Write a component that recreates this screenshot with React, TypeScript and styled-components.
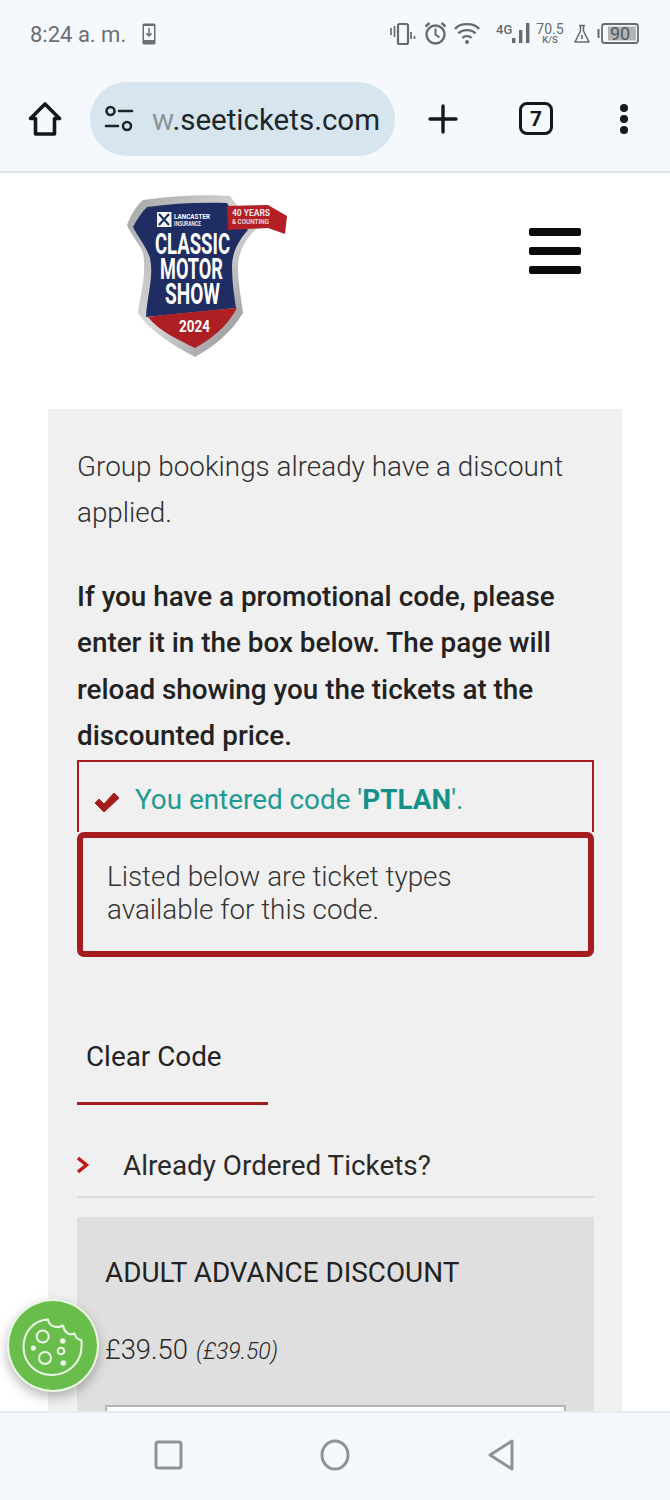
import React from "react";
import styled, { createGlobalStyle } from "styled-components";

const Global = createGlobalStyle`
  html, body { margin: 0; padding: 0; background: #fff; }
  body { font-family: Roboto, "Liberation Sans", sans-serif; }
  * { box-sizing: border-box; }
`;

const Screen = styled.div`
  position: relative;
  width: 670px;
  height: 1500px;
  display: flex;
  flex-direction: column;
  overflow: hidden;
`;

const StatusBar = styled.div`
  height: 68px;
  flex: none;
  background: #f5f9fe;
  display: flex;
  align-items: center;
  justify-content: space-between;
  padding: 0 30px;
  color: #6a6f73;
`;
const StatusLeft = styled.div`
  display: flex;
  align-items: center;
  gap: 16px;
`;
const Time = styled.span`
  font-size: 22px;
`;
const StatusRight = styled.div`
  display: flex;
  align-items: center;
`;

const Toolbar = styled.div`
  height: 105px;
  flex: none;
  background: #f5f9fe;
  border-bottom: 2px solid #dfe3e7;
  display: flex;
  align-items: center;
  padding: 0 0 2px 28px;
`;
const UrlPill = styled.div`
  width: 305px;
  height: 74px;
  margin-left: 28px;
  background: #d6e5ee;
  border-radius: 37px;
  display: flex;
  align-items: center;
  padding-left: 14px;
  overflow: hidden;
`;
const UrlText = styled.span`
  margin-left: 18px;
  padding-top: 3px;
  font-size: 29.5px;
  color: #20272c;
  white-space: nowrap;
`;
const FadedW = styled.span`
  color: #8b9499;
`;
const PlusSlot = styled.div`
  margin-left: 32px;
  display: flex;
`;
const TabCount = styled.div`
  width: 34px;
  height: 33px;
  margin-left: 60px;
  border: 3.4px solid #14181b;
  border-radius: 8px;
  display: flex;
  align-items: center;
  justify-content: center;
  font-size: 21px;
  font-weight: 700;
  color: #14181b;
`;
const Dots = styled.div`
  margin-left: 67px;
  display: flex;
  flex-direction: column;
  gap: 3px;
`;
const Dot = styled.span`
  width: 8px;
  height: 8px;
  border-radius: 50%;
  background: #14181b;
`;

const Page = styled.div`
  flex: 1;
  min-height: 0;
  overflow: hidden;
  background: #fff;
`;
const SiteHeader = styled.div`
  height: 236px;
  display: flex;
  padding: 22px 89px 0 127px;
  justify-content: space-between;
`;
const Burger = styled.div`
  width: 52px;
  margin-top: 33px;
  height: 46px;
  display: flex;
  flex-direction: column;
  justify-content: space-between;
`;
const BurgerBar = styled.span`
  height: 8px;
  border-radius: 2px;
  background: #0b0b0b;
`;

const Panel = styled.div`
  margin: 0 48px;
  background: #f0f0f0;
  padding: 35px 28px 0 29px;
  color: #2f2f2f;
`;
const Lead = styled.p`
  margin: 0;
  font-size: 27.85px;
  font-weight: 300;
  line-height: 46.4px;
`;
const Strong = styled.p`
  margin: 37px 0 0;
  font-size: 27.85px;
  font-weight: 500;
  line-height: 46.4px;
  color: #222;
`;
const Notice = styled.div`
  margin-top: 1px;
  border: 2px solid #a51c1e;
  border-bottom: 0;
  height: 72px;
  display: flex;
  align-items: center;
  padding-left: 15px;
  padding-top: 4px;
  gap: 15px;
`;
const CheckSlot = styled.span`
  display: flex;
  margin-top: 6px;
`;
const NoticeText = styled.span`
  font-size: 27.85px;
  font-weight: 400;
  color: #1f9a94;
  b { font-weight: 700; color: #14908b; }
`;
const Listed = styled.div`
  height: 125px;
  border: 6px solid #a51c1e;
  border-radius: 7px;
  padding: 22px 0 0 24px;
  font-size: 27.85px;
  font-weight: 300;
  line-height: 33px;
  color: #333;
`;
const ClearCode = styled.div`
  margin-top: 76px;
  width: 191px;
  height: 72px;
  padding: 9px 0 0 9px;
  border-bottom: 3px solid #a51c1e;
  font-size: 27.85px;
  line-height: 30px;
  color: #222;
`;
const Accordion = styled.div`
  display: flex;
  align-items: center;
  height: 93px;
  border-bottom: 2px solid #dcdcdc;
  gap: 32px;
  padding-top: 33px;
  padding-bottom: 4px;
  font-size: 27.85px;
  color: #2a2a2a;
`;
const TicketCard = styled.div`
  margin-top: 19px;
  height: 300px;
  background: #dfdfdf;
  padding: 39px 28px 0;
`;
const TicketName = styled.div`
  font-size: 27.85px;
  line-height: 34px;
  color: #222;
`;
const PriceRow = styled.div`
  margin-top: 43px;
  font-size: 27.4px;
  font-weight: 300;
  line-height: 34px;
  color: #2a2a2a;
`;
const PriceOld = styled.i`
  font-size: 23px;
  margin-left: 8px;
`;
const SelectBox = styled.div`
  margin-top: 36px;
  height: 80px;
  background: #fff;
  border: 2px solid #b5b5b5;
`;

const NavBar = styled.div`
  height: 89px;
  flex: none;
  background: #f5f9fe;
  border-top: 2px solid #e8ecef;
  display: flex;
  justify-content: center;
  align-items: center;
  gap: 136px;
  padding: 0 1px 4px 0;
`;

const CookieBadge = styled.div`
  position: absolute;
  left: 7px;
  top: 1299px;
  width: 92px;
  height: 93px;
  border-radius: 50%;
  background: #69bd4b;
  border: 2.5px solid #e9f7e3;
  box-shadow: 0 5px 12px rgba(0, 0, 0, 0.28);
  display: flex;
  align-items: center;
  justify-content: center;
`;

const HomeIcon = () => (
  <svg width="34" height="36" viewBox="0 0 34 36" fill="none" stroke="#14181b" strokeWidth="3.6" strokeLinejoin="round">
    <path d="M17 3 L31.5 17.5 H26.5 V33 H7.5 V17.5 H2.5 Z" />
  </svg>
);
const TuneIcon = () => (
  <svg width="30" height="28" viewBox="0 0 30 28" fill="none" stroke="#1e2529" strokeWidth="2.6" strokeLinecap="round">
    <circle cx="6.5" cy="6" r="4" />
    <path d="M15 6 H28" />
    <path d="M2 21 H14" />
    <circle cx="23" cy="21" r="4" />
  </svg>
);
const PlusIcon = () => (
  <svg width="32" height="32" viewBox="0 0 32 32" stroke="#14181b" strokeWidth="3.4" strokeLinecap="round">
    <path d="M16 3 V29 M3 16 H29" />
  </svg>
);
const DownloadIcon = () => (
  <svg width="14" height="22" viewBox="0 0 14 22">
    <rect x="0.5" y="0.5" width="13" height="21" rx="1.5" fill="#6a6f73" />
    <rect x="2" y="3" width="10" height="14" fill="#f5f9fe" />
    <path d="M7 5 V13 M4.4 10.4 L7 13 L9.6 10.4" stroke="#6a6f73" strokeWidth="1.5" fill="none" />
  </svg>
);
const StatusIcons = () => (
  <svg width="252" height="30" viewBox="0 0 252 30" fill="none" stroke="#666b6f" strokeWidth="2">
    {/* vibrate */}
    <path d="M3 9 V16 M6.5 7 V18 M23 13 V20 M26.5 17 V20" strokeWidth="1.7" />
    <rect x="10" y="5" width="10" height="20" rx="1.6" strokeWidth="2.2" />
    {/* alarm */}
    <circle cx="47.5" cy="15.5" r="9" strokeWidth="2.4" />
    <path d="M47.5 9.5 V15.5 L51.5 18.5" />
    <path d="M37.5 7.5 L41.5 4 M57.5 7.5 L53.5 4" strokeWidth="2.4" />
    {/* wifi */}
    <path d="M67 10 C72 3.5 86 3.5 91 10" strokeWidth="2.4" />
    <path d="M70.5 14.5 C74 10 84 10 87.5 14.5" strokeWidth="2.4" />
    <path d="M74.5 19 C76.5 16.5 81.5 16.5 83.5 19" strokeWidth="2.4" />
    <circle cx="79" cy="23" r="2" fill="#666b6f" stroke="none" />
    {/* 4G */}
    <text x="108" y="15" fontFamily="Roboto" fontSize="13" fontWeight="500" fill="#666b6f" stroke="none">4G</text>
    {/* signal */}
    <rect x="124" y="19" width="3.4" height="5" fill="#666b6f" stroke="none" />
    <rect x="131" y="11" width="3.4" height="13" fill="#666b6f" stroke="none" />
    <rect x="138" y="4" width="3.4" height="20" fill="#666b6f" stroke="none" />
    {/* speed */}
    <text x="162" y="15" textAnchor="middle" fontFamily="Roboto" fontSize="14" fill="#666b6f" stroke="none">70.5</text>
    <text x="162" y="24" textAnchor="middle" fontFamily="Roboto" fontSize="9.5" fontWeight="500" fill="#666b6f" stroke="none">K/S</text>
    {/* flask */}
    <path d="M191 6.5 H197 M192.5 6.5 V12 L187 23 H201 L195.5 12 V6.5" strokeWidth="1.6" strokeLinejoin="round" />
    <path d="M194 16 V20" strokeWidth="1.6" />
    {/* battery */}
    <rect x="209.5" y="10" width="2" height="9" fill="#666b6f" stroke="none" />
    <rect x="214" y="5" width="36" height="19" rx="2.5" strokeWidth="1.8" />
    <rect x="220" y="7.5" width="28" height="14" fill="#b1b3b5" stroke="none" />
    <text x="222" y="21" fontFamily="Roboto" fontSize="18" fill="#55595c" stroke="none">90</text>
  </svg>
);
const Logo = () => (
  <svg width="160" height="164" viewBox="0 0 160 164">
    <defs>
      <linearGradient id="rim" x1="0" y1="0" x2="1" y2="1">
        <stop offset="0" stopColor="#a4a5a7" />
        <stop offset="0.5" stopColor="#d8d8d9" />
        <stop offset="1" stopColor="#85868a" />
      </linearGradient>
    </defs>
    <path d="M16 5 C45 1 78 -1 103 1 C110 10 120 24 130 33 C118 44 111 58 111 72 C111 88 114 102 116 118 C104 138 86 152 68 162 C50 152 24 138 11 118 C13 100 20 80 16 58 C12 48 4 40 0 30 C4 20 9 11 16 5 Z" fill="url(#rim)" />
    <path d="M20 12 C46 8 76 7 100 8 C106 18 114 28 121 35 C111 46 105 58 105 72 C105 86 107 100 109 113 C80 116 48 119 19 122 C20 100 27 82 23 63 C19 51 11 42 6 32 C10 24 15 17 20 12 Z" fill="#1f2d62" />
    <path d="M21 122 C50 118 80 116 110 113 C100 132 84 144 68 153 C50 144 32 136 21 122 Z" fill="#ae1f24" />
    <rect x="30" y="17" width="14.5" height="15" fill="#f3f3f3" />
    <path d="M32 19 L42 30 M42 19 L32 30" stroke="#1d2b63" strokeWidth="2" />
    <text x="47" y="24" fontFamily="Roboto" fontSize="7.5" fontWeight="700" fill="#fff" textLength="36" lengthAdjust="spacingAndGlyphs">LANCASTER</text>
    <text x="47" y="31" fontFamily="Roboto" fontSize="6.5" fontWeight="500" fill="#fff" textLength="27" lengthAdjust="spacingAndGlyphs">INSURANCE</text>
    <g fontFamily="Roboto" fontWeight="700" fill="#fff">
      <text x="28" y="59" fontSize="29" textLength="75" lengthAdjust="spacingAndGlyphs">CLASSIC</text>
      <text x="33" y="84" fontSize="29" textLength="63" lengthAdjust="spacingAndGlyphs">MOTOR</text>
      <text x="38" y="109" fontSize="29" textLength="55" lengthAdjust="spacingAndGlyphs">SHOW</text>
      <text x="52" y="137" fontSize="17" textLength="31" lengthAdjust="spacingAndGlyphs">2024</text>
    </g>
    <path d="M100 11 L141 10 L160 21 L158 39 L141 33 L101 35 Z" fill="#b41f26" />
    <text x="105" y="20.5" fontFamily="Roboto" fontSize="9" fontWeight="700" fill="#f1e6e6" textLength="38" lengthAdjust="spacingAndGlyphs">40 YEARS</text>
    <text x="105" y="29" fontFamily="Roboto" fontSize="7" fontWeight="500" fill="#f1e6e6" textLength="37" lengthAdjust="spacingAndGlyphs">&amp; COUNTING</text>
  </svg>
);
const Check = () => (
  <svg width="26" height="22" viewBox="0 0 26 22">
    <path d="M1 12 L5 8 L10 13 L20 2 L25 7 L10 21 Z" fill="#a51c1e" stroke="#a51c1e" strokeLinejoin="round" />
  </svg>
);
const Chevron = () => (
  <svg width="14" height="18" viewBox="0 0 14 18" fill="none" stroke="#c4161c" strokeWidth="3.4">
    <path d="M1 2 L9.5 9 L1 16" />
  </svg>
);
const CookieIcon = () => (
  <svg width="66" height="66" viewBox="0 0 66 66" fill="none" stroke="#eef8e8" strokeWidth="2">
    <path d="M28 6.5 C13 7 3.5 20 3.5 34 C3.5 50 16 62 32 62 C48 62 61.5 49 61.5 34 C61.5 31 61.5 29 61.5 27 C58 27 55.5 24 54.5 20.5 C49 23 44 19 43 12.5 C36 16 29 13 28 6.5 Z" strokeLinejoin="round" />
    <circle cx="22.7" cy="23.5" r="6" />
    <circle cx="25" cy="45" r="6" />
    <circle cx="41" cy="38" r="3.3" />
    <circle cx="13.3" cy="35" r="2.6" fill="#eef8e8" stroke="none" />
    <circle cx="42.7" cy="28" r="2.8" fill="#eef8e8" stroke="none" />
    <circle cx="43.3" cy="50" r="2.8" fill="#eef8e8" stroke="none" />
  </svg>
);
const NavSquare = () => (
  <svg width="30" height="30" viewBox="0 0 30 30" fill="none" stroke="#8e9399" strokeWidth="3">
    <rect x="2" y="2" width="25" height="26" rx="2" />
  </svg>
);
const NavCircle = () => (
  <svg width="30" height="32" viewBox="0 0 30 32" fill="none" stroke="#8e9399" strokeWidth="3">
    <ellipse cx="15" cy="16" rx="13" ry="14" />
  </svg>
);
const NavBack = () => (
  <svg width="30" height="32" viewBox="0 0 30 32" fill="none" stroke="#8e9399" strokeWidth="3" strokeLinejoin="round">
    <path d="M26 2 V30 L4 16 Z" />
  </svg>
);

export default function App() {
  return (
    <Screen>
      <Global />
      <StatusBar>
        <StatusLeft>
          <Time>8:24 a. m.</Time>
          <DownloadIcon />
        </StatusLeft>
        <StatusRight>
          <StatusIcons />
        </StatusRight>
      </StatusBar>
      <Toolbar>
        <HomeIcon />
        <UrlPill>
          <TuneIcon />
          <UrlText>
            <FadedW>w</FadedW>.seetickets.com
          </UrlText>
        </UrlPill>
        <PlusSlot>
          <PlusIcon />
        </PlusSlot>
        <TabCount>7</TabCount>
        <Dots>
          <Dot />
          <Dot />
          <Dot />
        </Dots>
      </Toolbar>
      <Page>
        <SiteHeader>
          <Logo />
          <Burger>
            <BurgerBar />
            <BurgerBar />
            <BurgerBar />
          </Burger>
        </SiteHeader>
        <Panel>
          <Lead>Group bookings already have a discount applied.</Lead>
          <Strong>
            If you have a promotional code, please enter it in the box below. The page will reload showing you the
            tickets at the discounted price.
          </Strong>
          <Notice>
            <CheckSlot>
              <Check />
            </CheckSlot>
            <NoticeText>
              You entered code '<b>PTLAN</b>'.
            </NoticeText>
          </Notice>
          <Listed>
            Listed below are ticket types
            <br />
            available for this code.
          </Listed>
          <ClearCode>Clear Code</ClearCode>
          <Accordion>
            <Chevron />
            Already Ordered Tickets?
          </Accordion>
          <TicketCard>
            <TicketName>ADULT ADVANCE DISCOUNT</TicketName>
            <PriceRow>
              £39.50<PriceOld>(£39.50)</PriceOld>
            </PriceRow>
            <SelectBox />
          </TicketCard>
        </Panel>
      </Page>
      <NavBar>
        <NavSquare />
        <NavCircle />
        <NavBack />
      </NavBar>
      <CookieBadge>
        <CookieIcon />
      </CookieBadge>
    </Screen>
  );
}
